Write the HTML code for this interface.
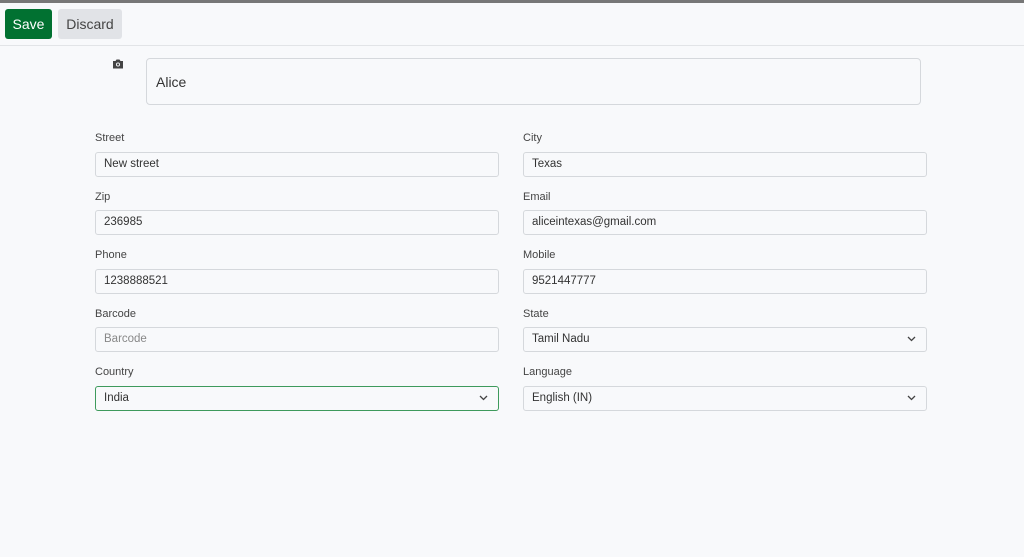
<!DOCTYPE html>
<html><head><style>
body{margin:0;width:1024px;height:557px;background:#f8f9fb;font-family:"Liberation Sans",sans-serif;position:relative;overflow:hidden;color:#333}
.top{position:absolute;left:0;top:0;width:1024px;height:3px;background:#777}
.bar{position:absolute;left:0;top:45px;width:1024px;height:1px;background:#e2e4e7}
.btn{position:absolute;top:9px;height:30px;border-radius:3px;font-size:14px;line-height:30px;text-align:center}
.lbl{position:absolute;font-size:11px;color:#444}
.in{position:absolute;height:23px;border:1px solid #d5d8dc;border-radius:3px;background:#f8f9fb;font-size:11.5px;line-height:23px;padding-left:8px;box-sizing:content-box;color:#333}
.chev{position:absolute;right:10px;top:8px}
</style></head><body>
<div class="top"></div>
<div class="btn" style="left:5px;width:47px;background:#017131;color:#fff">Save</div>
<div class="btn" style="left:58px;width:64px;background:#e1e3e7;color:#444">Discard</div>
<div class="bar"></div>
<svg style="position:absolute;left:112px;top:59px" width="12" height="10" viewBox="0 0 12 10"><path d="M1 2h2.5l1-1.5h3l1 1.5H11v7.5H1z" fill="#444"/><circle cx="6" cy="5.5" r="2" fill="#f8f9fb"/><circle cx="6" cy="5.5" r="1.1" fill="#444"/></svg>
<div class="in" style="left:146px;top:58px;width:764px;height:45px;line-height:46px;font-size:14px;padding-left:9px;border-radius:4px">Alice</div>

<div class="lbl" style="left:95px;top:132px">Street</div>
<div class="lbl" style="left:523px;top:132px">City</div>
<div class="in" style="left:95px;top:152px;width:394px">New street</div>
<div class="in" style="left:523px;top:152px;width:394px">Texas</div>

<div class="lbl" style="left:95px;top:191px">Zip</div>
<div class="lbl" style="left:523px;top:191px">Email</div>
<div class="in" style="left:95px;top:210px;width:394px">236985</div>
<div class="in" style="left:523px;top:210px;width:394px">aliceintexas@gmail.com</div>

<div class="lbl" style="left:95px;top:249px">Phone</div>
<div class="lbl" style="left:523px;top:249px">Mobile</div>
<div class="in" style="left:95px;top:269px;width:394px">1238888521</div>
<div class="in" style="left:523px;top:269px;width:394px">9521447777</div>

<div class="lbl" style="left:95px;top:308px">Barcode</div>
<div class="lbl" style="left:523px;top:308px">State</div>
<div class="in" style="left:95px;top:327px;width:394px;color:#888">Barcode</div>
<div class="in" style="left:523px;top:327px;width:394px">Tamil Nadu<svg class="chev" width="9" height="6" viewBox="0 0 9 6"><path d="M1 1l3.5 3.5L8 1" fill="none" stroke="#444" stroke-width="1.3"/></svg></div>

<div class="lbl" style="left:95px;top:366px">Country</div>
<div class="lbl" style="left:523px;top:366px">Language</div>
<div class="in" style="left:95px;top:386px;width:394px;border-color:#3e9a5c">India<svg class="chev" width="9" height="6" viewBox="0 0 9 6"><path d="M1 1l3.5 3.5L8 1" fill="none" stroke="#444" stroke-width="1.3"/></svg></div>
<div class="in" style="left:523px;top:386px;width:394px">English (IN)<svg class="chev" width="9" height="6" viewBox="0 0 9 6"><path d="M1 1l3.5 3.5L8 1" fill="none" stroke="#444" stroke-width="1.3"/></svg></div>
</body></html>
